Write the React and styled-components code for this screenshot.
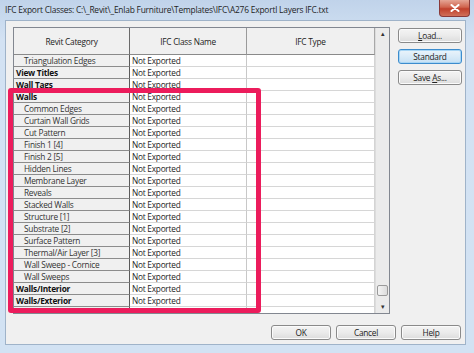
import React from "react";
import styled, { createGlobalStyle } from "styled-components";

const GlobalStyle = createGlobalStyle`
  html, body {
    margin: 0;
    padding: 0;
    background: #d4e3f4;
  }
  * {
    box-sizing: border-box;
  }
`;

const rows = [
  { name: "Triangulation Edges", sub: true },
  { name: "View Titles" },
  { name: "Wall Tags" },
  { name: "Walls" },
  { name: "Common Edges", sub: true },
  { name: "Curtain Wall Grids", sub: true },
  { name: "Cut Pattern", sub: true },
  { name: "Finish 1 [4]", sub: true },
  { name: "Finish 2 [5]", sub: true },
  { name: "Hidden Lines", sub: true },
  { name: "Membrane Layer", sub: true },
  { name: "Reveals", sub: true },
  { name: "Stacked Walls", sub: true },
  { name: "Structure [1]", sub: true },
  { name: "Substrate [2]", sub: true },
  { name: "Surface Pattern", sub: true },
  { name: "Thermal/Air Layer [3]", sub: true },
  { name: "Wall Sweep - Cornice", sub: true },
  { name: "Wall Sweeps", sub: true },
  { name: "Walls/Interior" },
  { name: "Walls/Exterior" },
  { name: "Walls/Foundation" },
];

export default function App() {
  return (
    <>
      <GlobalStyle />
      <Window>
        <TitleBar>
          <Title>
            IFC Export Classes: C:\_Revit\_Enlab Furniture\Templates\IFC\A276 Exportl Layers IFC.txt
          </Title>
          <CloseButton>
            <svg width="10" height="8" viewBox="0 0 10 8">
              <path d="M1.5 1 L8.5 7 M8.5 1 L1.5 7" stroke="#fff" strokeWidth="2" strokeLinecap="round" />
            </svg>
          </CloseButton>
        </TitleBar>
        <Client>
          <MainRow>
            <GridBox>
              <GridBody>
                <HeaderRow>
                  <HeadCell w={116} dark>Revit Category</HeadCell>
                  <HeadCell w={117}>IFC Class Name</HeadCell>
                  <HeadCell w={128} last>IFC Type</HeadCell>
                </HeaderRow>
                {rows.map(r => (
                  <Row key={r.name}>
                    <CatCell sub={r.sub}>{r.name}</CatCell>
                    <ValueCell w={117}>Not Exported</ValueCell>
                    <ValueCell w={128} last></ValueCell>
                  </Row>
                ))}
              </GridBody>
              <Scrollbar>
                <Arrow>▴</Arrow>
                <Track>
                  <Thumb />
                </Track>
                <Arrow>▾</Arrow>
              </Scrollbar>
              <Highlight />
            </GridBox>
            <SideButtons>
              <Button><span><u>L</u>oad...</span></Button>
              <Button primary><span>Standard</span></Button>
              <Button><span>Save <u>A</u>s...</span></Button>
            </SideButtons>
          </MainRow>
          <BottomRow>
            <Button><span>OK</span></Button>
            <Button><span>Cancel</span></Button>
            <Button><span>Help</span></Button>
          </BottomRow>
        </Client>
      </Window>
    </>
  );
}

const Window = styled.div`
  width: 474px;
  height: 353px;
  display: flex;
  flex-direction: column;
  background: linear-gradient(to bottom, #c0d3ea 0px, #d3e2f3 40px, #d2e2f3 100%);
  padding: 0 8px 8px 5px;
  font-family: "Open Sans", "Noto Sans", sans-serif;
  font-size: 8.3px;
  letter-spacing: -0.25px;
  color: #1a1a1a;
  overflow: hidden;
`;

const TitleBar = styled.div`
  height: 20px;
  display: flex;
  align-items: flex-start;
  justify-content: space-between;
`;

const Title = styled.div`
  padding-top: 4px;
  font-size: 8.4px;
  letter-spacing: -0.2px;
  color: #1e1e1e;
  white-space: nowrap;
`;

const CloseButton = styled.div`
  width: 31px;
  height: 17px;
  margin-right: -4px;
  border-radius: 0 0 4px 4px;
  border: 1px solid #8a3a3a;
  border-top: none;
  background: linear-gradient(to bottom, #e5a595 0%, #d0644e 45%, #c0402c 55%, #d0705a 100%);
  display: flex;
  align-items: center;
  justify-content: center;
`;

const Client = styled.div`
  flex: 1;
  background: #f0f0f0;
  border: 1px solid #9fb3c9;
  padding: 6px 4px 0 7px;
  display: flex;
  flex-direction: column;
`;

const MainRow = styled.div`
  display: flex;
  gap: 8px;
`;

const GridBox = styled.div`
  position: relative;
  width: 377px;
  height: 287px;
  border: 1px solid #828790;
  background: #fff;
  display: flex;
`;

const GridBody = styled.div`
  width: 361px;
  overflow: hidden;
`;

const HeaderRow = styled.div`
  display: flex;
  height: 27px;
  background: #f0f0f0;
`;

const HeadCell = styled.div`
  width: ${p => p.w}px;
  display: flex;
  align-items: center;
  justify-content: center;
  border-right: 1px solid ${p => (p.dark ? "#6a6a6a" : p.last ? "#a8a8a8" : "#9a9a9a")};
  border-bottom: 1px solid #8a8a8a;
  color: #222;
`;

const Row = styled.div`
  display: flex;
  height: 12px;
  line-height: 11px;
`;

const CatCell = styled.div`
  width: 116px;
  background: #f0f0f0;
  border-right: 1px solid #5a5a5a;
  border-bottom: 1px solid #8c8c8c;
  padding-left: ${p => (p.sub ? 10 : 2)}px;
  font-weight: ${p => (p.sub ? 400 : 700)};
  color: ${p => (p.sub ? "#333" : "#111")};
  white-space: nowrap;
  overflow: hidden;
`;

const ValueCell = styled.div`
  width: ${p => p.w}px;
  border-right: 1px solid ${p => (p.last ? "#d4d4d4" : "#c8c8c8")};
  border-bottom: 1px solid #d6d6d6;
  padding-left: 2px;
  color: #222;
  white-space: nowrap;
`;

const Scrollbar = styled.div`
  width: 14px;
  background: #ebebeb;
  border-left: 1px solid #dcdcdc;
  display: flex;
  flex-direction: column;
  align-items: center;
`;

const Arrow = styled.div`
  height: 12px;
  font-size: 7px;
  line-height: 12px;
  color: #333;
`;

const Track = styled.div`
  flex: 1;
  width: 100%;
  display: flex;
  flex-direction: column;
  justify-content: flex-end;
  align-items: center;
  padding-bottom: 5px;
`;

const Thumb = styled.div`
  width: 11px;
  height: 11px;
  border: 1px solid #9a9a9a;
  border-radius: 2px;
  background: linear-gradient(to right, #f4f4f4, #dcdcdc);
`;

const Highlight = styled.div`
  position: absolute;
  left: -6px;
  top: 60px;
  width: 253px;
  height: 225px;
  border: 5px solid #ec1c5c;
  border-radius: 3px;
  pointer-events: none;
`;

const SideButtons = styled.div`
  display: flex;
  flex-direction: column;
  gap: 6px;
  padding-top: 1px;
`;

const Button = styled.div`
  width: 64px;
  height: 15px;
  border: 1px solid ${p => (p.primary ? "#3c8ccd" : "#8a8a8a")};
  border-radius: 3px;
  background: ${p =>
    p.primary
      ? "linear-gradient(to bottom, #eaf4fb 0%, #d9ebf8 50%, #c6e0f4 100%)"
      : "linear-gradient(to bottom, #f4f4f4 0%, #ebebeb 50%, #dcdcdc 100%)"};
  box-shadow: ${p => (p.primary ? "inset 0 0 0 1px #a8d6f5" : "inset 0 0 0 1px #fbfbfb")};
  display: flex;
  align-items: center;
  justify-content: center;
  color: #222;
  white-space: pre;
  u {
    text-decoration: underline;
  }
`;

const BottomRow = styled.div`
  display: flex;
  justify-content: flex-end;
  gap: 5px;
  margin-top: 11px;
  ${Button} {
    width: 60px;
  }
`;
